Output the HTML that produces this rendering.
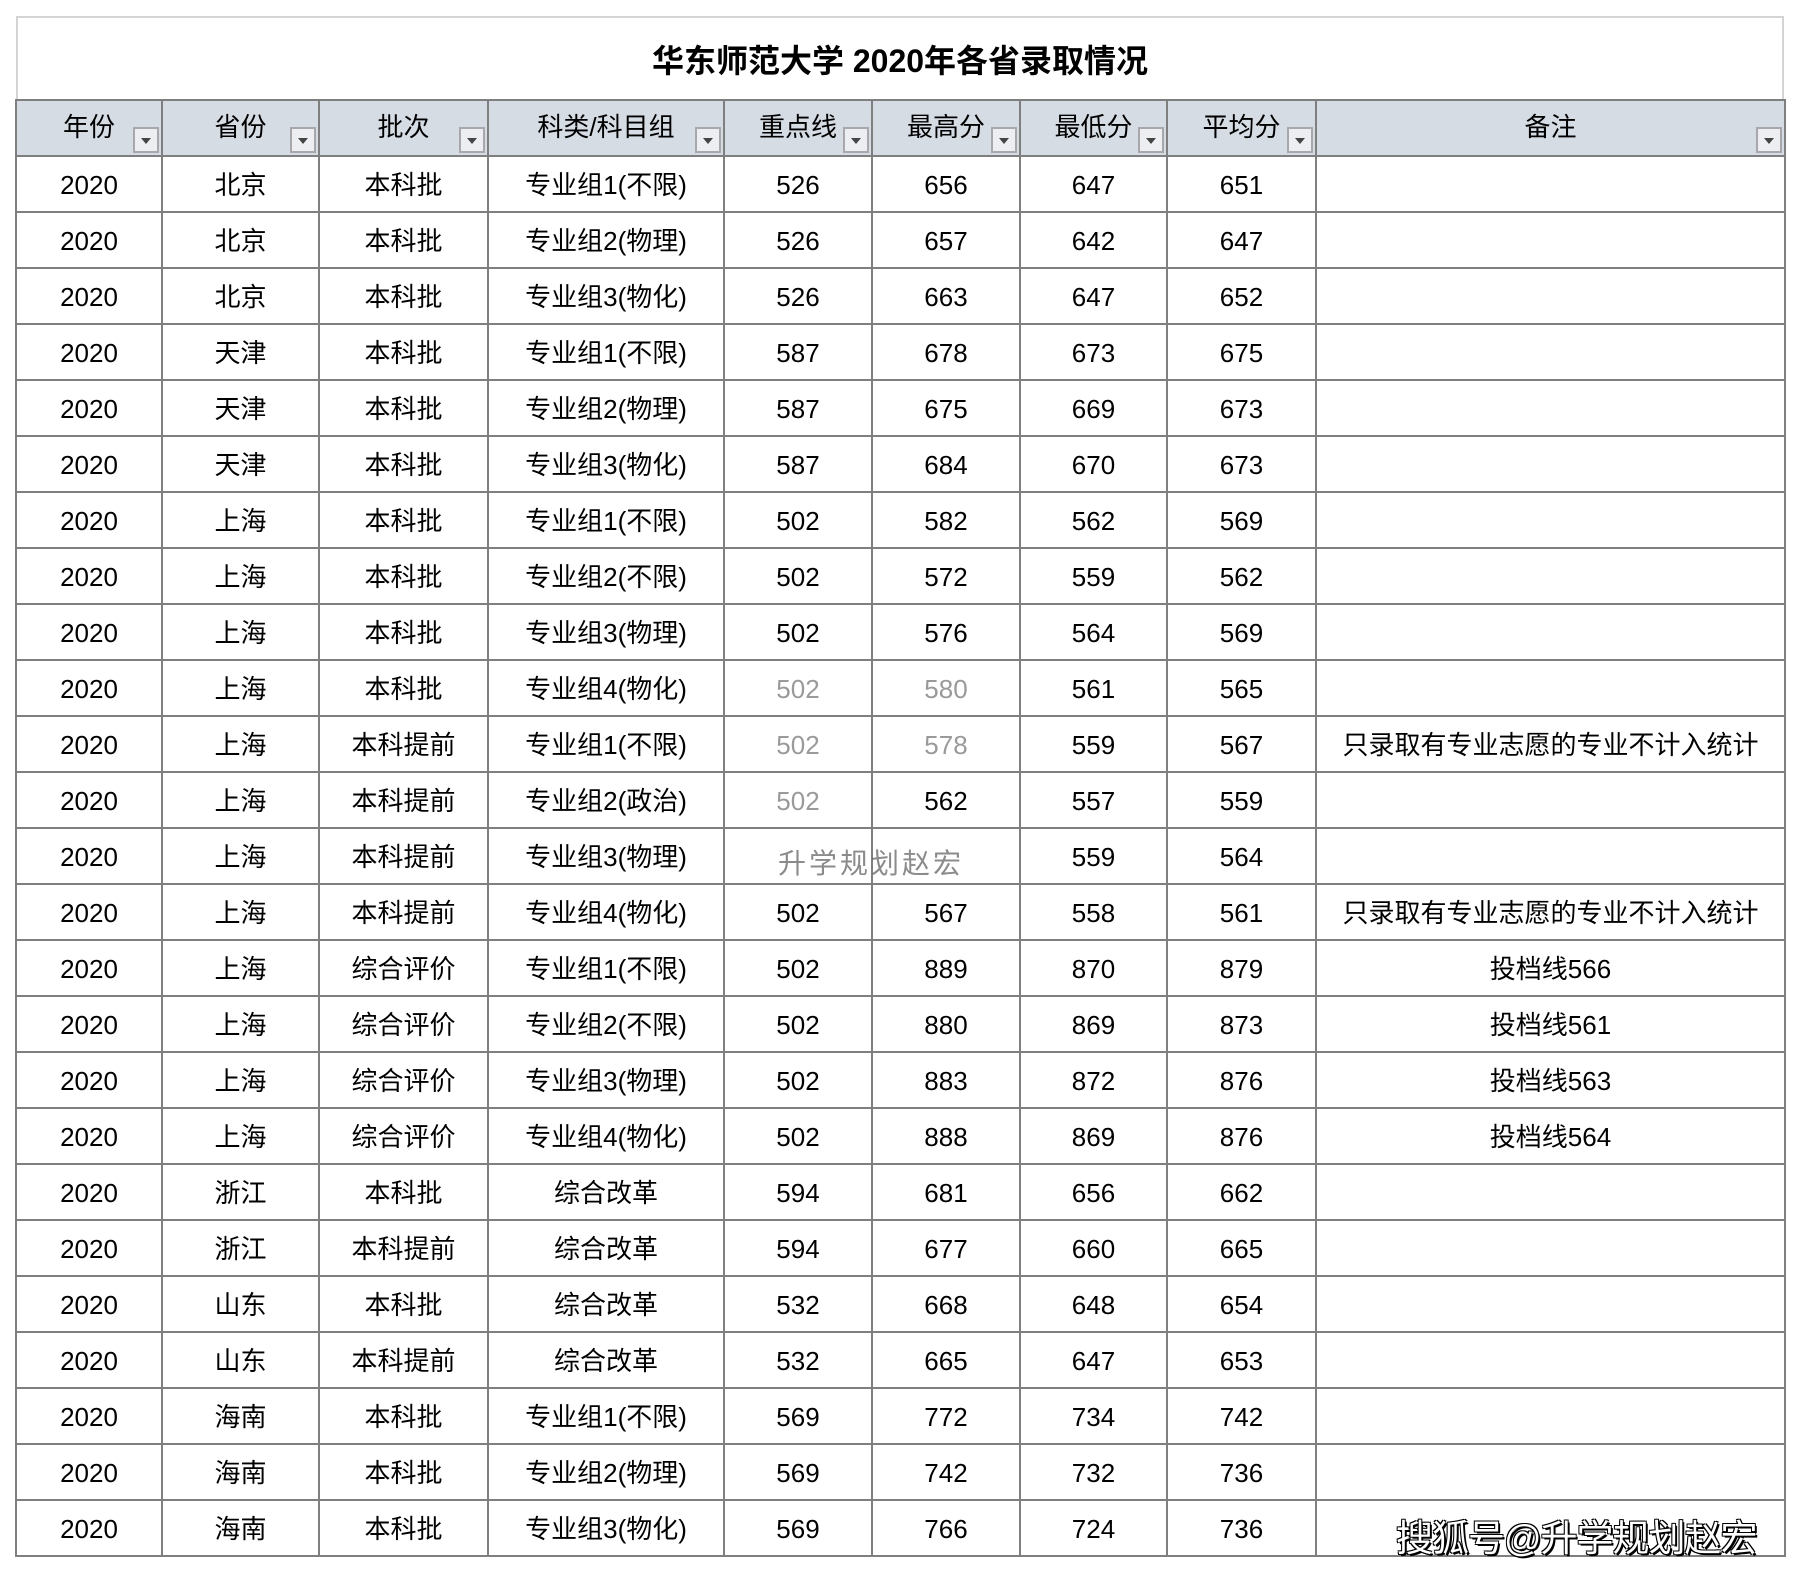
<!DOCTYPE html>
<html><head><meta charset="utf-8"><style>
body{margin:0;background:#fff;width:1802px;height:1574px;position:relative;overflow:hidden;font-family:"Liberation Sans","Noto Sans CJK SC",sans-serif}
.title{position:absolute;left:16px;top:16px;width:1768px;height:84px;border:2px solid #d4d4d4;border-bottom:none;box-sizing:border-box;text-align:center;line-height:86px;font-size:32px;font-weight:bold;color:#000}
table{position:absolute;left:15px;top:99px;border-collapse:collapse;table-layout:fixed}
td,th{border:2px solid #7f7f7f;text-align:center;font-size:26px;font-weight:normal;padding:0;color:#000;position:relative}
th{background:#d6dce4;height:54px;line-height:52px;vertical-align:top}
td{height:52px;padding-top:2px;line-height:30px}
.f{position:absolute;right:2px;bottom:2px;width:26px;height:26px;background:#eceef1;border:2px solid #a8a8ac;box-sizing:border-box}
.f:after{content:"";position:absolute;left:6px;top:9px;border-left:5px solid transparent;border-right:5px solid transparent;border-top:6px solid #444}
.g{color:#9a9a9a}
.wm{position:absolute;left:1396px;top:1508px;font-size:37px;color:#fff;text-shadow:2px 2px 0 #000,-1px -1px 0 #000,1px -1px 0 #000,-1px 1px 0 #000;letter-spacing:-1px}
.wm2{position:absolute;left:778px;top:842px;font-size:28px;color:rgba(90,90,90,.7);letter-spacing:3px}
</style></head><body>
<div class="title">华东师范大学 2020年各省录取情况</div>
<table>
<colgroup><col style="width:146px"><col style="width:157px"><col style="width:169px"><col style="width:236px"><col style="width:148px"><col style="width:148px"><col style="width:147px"><col style="width:149px"><col style="width:469px"></colgroup>
<tr><th>年份<span class="f"></span></th><th>省份<span class="f"></span></th><th>批次<span class="f"></span></th><th>科类/科目组<span class="f"></span></th><th>重点线<span class="f"></span></th><th>最高分<span class="f"></span></th><th>最低分<span class="f"></span></th><th>平均分<span class="f"></span></th><th>备注<span class="f"></span></th></tr>
<tr><td>2020</td><td>北京</td><td>本科批</td><td>专业组1(不限)</td><td>526</td><td>656</td><td>647</td><td>651</td><td></td></tr>
<tr><td>2020</td><td>北京</td><td>本科批</td><td>专业组2(物理)</td><td>526</td><td>657</td><td>642</td><td>647</td><td></td></tr>
<tr><td>2020</td><td>北京</td><td>本科批</td><td>专业组3(物化)</td><td>526</td><td>663</td><td>647</td><td>652</td><td></td></tr>
<tr><td>2020</td><td>天津</td><td>本科批</td><td>专业组1(不限)</td><td>587</td><td>678</td><td>673</td><td>675</td><td></td></tr>
<tr><td>2020</td><td>天津</td><td>本科批</td><td>专业组2(物理)</td><td>587</td><td>675</td><td>669</td><td>673</td><td></td></tr>
<tr><td>2020</td><td>天津</td><td>本科批</td><td>专业组3(物化)</td><td>587</td><td>684</td><td>670</td><td>673</td><td></td></tr>
<tr><td>2020</td><td>上海</td><td>本科批</td><td>专业组1(不限)</td><td>502</td><td>582</td><td>562</td><td>569</td><td></td></tr>
<tr><td>2020</td><td>上海</td><td>本科批</td><td>专业组2(不限)</td><td>502</td><td>572</td><td>559</td><td>562</td><td></td></tr>
<tr><td>2020</td><td>上海</td><td>本科批</td><td>专业组3(物理)</td><td>502</td><td>576</td><td>564</td><td>569</td><td></td></tr>
<tr><td>2020</td><td>上海</td><td>本科批</td><td>专业组4(物化)</td><td class="g">502</td><td class="g">580</td><td>561</td><td>565</td><td></td></tr>
<tr><td>2020</td><td>上海</td><td>本科提前</td><td>专业组1(不限)</td><td class="g">502</td><td class="g">578</td><td>559</td><td>567</td><td>只录取有专业志愿的专业不计入统计</td></tr>
<tr><td>2020</td><td>上海</td><td>本科提前</td><td>专业组2(政治)</td><td class="g">502</td><td>562</td><td>557</td><td>559</td><td></td></tr>
<tr><td>2020</td><td>上海</td><td>本科提前</td><td>专业组3(物理)</td><td class="g"></td><td class="g"></td><td>559</td><td>564</td><td></td></tr>
<tr><td>2020</td><td>上海</td><td>本科提前</td><td>专业组4(物化)</td><td>502</td><td>567</td><td>558</td><td>561</td><td>只录取有专业志愿的专业不计入统计</td></tr>
<tr><td>2020</td><td>上海</td><td>综合评价</td><td>专业组1(不限)</td><td>502</td><td>889</td><td>870</td><td>879</td><td>投档线566</td></tr>
<tr><td>2020</td><td>上海</td><td>综合评价</td><td>专业组2(不限)</td><td>502</td><td>880</td><td>869</td><td>873</td><td>投档线561</td></tr>
<tr><td>2020</td><td>上海</td><td>综合评价</td><td>专业组3(物理)</td><td>502</td><td>883</td><td>872</td><td>876</td><td>投档线563</td></tr>
<tr><td>2020</td><td>上海</td><td>综合评价</td><td>专业组4(物化)</td><td>502</td><td>888</td><td>869</td><td>876</td><td>投档线564</td></tr>
<tr><td>2020</td><td>浙江</td><td>本科批</td><td>综合改革</td><td>594</td><td>681</td><td>656</td><td>662</td><td></td></tr>
<tr><td>2020</td><td>浙江</td><td>本科提前</td><td>综合改革</td><td>594</td><td>677</td><td>660</td><td>665</td><td></td></tr>
<tr><td>2020</td><td>山东</td><td>本科批</td><td>综合改革</td><td>532</td><td>668</td><td>648</td><td>654</td><td></td></tr>
<tr><td>2020</td><td>山东</td><td>本科提前</td><td>综合改革</td><td>532</td><td>665</td><td>647</td><td>653</td><td></td></tr>
<tr><td>2020</td><td>海南</td><td>本科批</td><td>专业组1(不限)</td><td>569</td><td>772</td><td>734</td><td>742</td><td></td></tr>
<tr><td>2020</td><td>海南</td><td>本科批</td><td>专业组2(物理)</td><td>569</td><td>742</td><td>732</td><td>736</td><td></td></tr>
<tr><td>2020</td><td>海南</td><td>本科批</td><td>专业组3(物化)</td><td>569</td><td>766</td><td>724</td><td>736</td><td></td></tr>
</table>
<div class="wm2">升学规划赵宏</div>
<div class="wm">搜狐号@升学规划赵宏</div>
</body></html>
